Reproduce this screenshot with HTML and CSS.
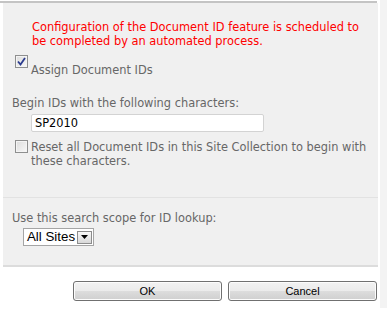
FILE: index.html
```html
<!DOCTYPE html>
<html>
<head>
<meta charset="utf-8">
<link rel="stylesheet" href="styles.css">
</head>
<body>
<div class="page">
  <div class="main">
    <div class="topline"></div>
    <div class="panel">
      <div class="section first">
        <p class="warn">Configuration of the Document ID feature is scheduled to be completed by an automated process.</p>
        <div class="check-row assign">
          <span class="cb checked"><svg width="9" height="9" viewBox="0 0 9 9"><path d="M1 4.5 L3.5 7.5 L8 1" fill="none" stroke="#2b3b8e" stroke-width="1.8"/></svg></span>
          <span class="label assign-label">Assign Document IDs</span>
        </div>
        <div class="field-label begin">Begin IDs with the following characters:</div>
        <div class="input">SP2010</div>
        <div class="check-row reset">
          <span class="cb"></span>
          <span class="label">Reset all Document IDs in this Site Collection to begin with these characters.</span>
        </div>
      </div>
      <div class="section second">
        <div class="field-label">Use this search scope for ID lookup:</div>
        <div class="select"><span class="sel-text">All Sites</span><span class="sel-btn"><svg width="7" height="4" viewBox="0 0 7 4"><path d="M0 0 H7 L3.5 4 Z" fill="#000"/></svg></span></div>
      </div>
    </div>
    <div class="buttons">
      <button class="btn">OK</button>
      <button class="btn">Cancel</button>
    </div>
  </div>
  <div class="side"></div>
</div>
</body>
</html>
```
FILE: styles.css
```css
html, body {
  margin: 0;
  padding: 0;
  background: #ffffff;
}
body {
  font-family: "DejaVu Sans", Verdana, sans-serif;
  font-size: 11.4px;
  color: #676767;
}
.page {
  display: flex;
  width: 387px;
  height: 315px;
}
.main {
  width: 378px;
  display: flex;
  flex-direction: column;
}
.topline {
  height: 2px;
  margin-top: 1px;
  width: 377px;
  background: #c4c4c4;
}
.panel {
  margin-left: 3px;
  width: 375px;
  background: #f0f0f0;
  border-bottom: 2px solid #dcdcdc;
}
.section.first {
  height: 195px;
  border-bottom: 1px solid #e2e2e2;
  padding-top: 17px;
  box-sizing: border-box;
}
.warn {
  margin: 0 0 0 29px;
  color: #ff0000;
  line-height: 14px;
  width: 335px;
}
.check-row {
  display: flex;
  align-items: flex-start;
  margin-left: 12px;
}
.assign {
  margin-top: 7px;
}
.cb {
  width: 11px;
  height: 11px;
  border: 1px solid #8e8f8f;
  background: linear-gradient(135deg, #dcdcdc, #f8f8f8);
  display: flex;
  align-items: center;
  justify-content: center;
  flex: none;
  box-shadow: inset 0 0 0 1px #f4f4f4;
}
.label {
  margin-left: 3px;
  line-height: 14px;
  width: 345px;
}
.assign-label {
  margin-top: 8px;
}
.field-label {
  margin-left: 9px;
  line-height: 14px;
}
.begin {
  margin-top: 19px;
}
.input {
  margin: 4px 0 0 28px;
  height: 16px;
  border: 1px solid #d3d3d3;
  border-radius: 2px;
  background: #ffffff;
  color: #000000;
  line-height: 16px;
  padding-left: 3px;
  box-sizing: content-box;
  width: 228px;
}
.reset {
  margin-top: 8px;
}
.section.second {
  height: 67px;
  padding-top: 13px;
  box-sizing: border-box;
}
.select {
  margin: 3px 0 0 20px;
  display: inline-flex;
  align-items: center;
  height: 16px;
  border: 1px solid #a5a5a5;
  background: #ffffff;
  padding: 0 1px 0 3px;
}
.sel-text {
  font-family: "Liberation Sans", Arial, sans-serif;
  font-size: 13.3px;
  color: #000000;
  line-height: 16px;
  margin-right: 2px;
}
.sel-btn {
  width: 15px;
  height: 13px;
  border: 1px solid #8c8c8c;
  background: linear-gradient(#f8f8f8, #d8d8d8);
  display: flex;
  align-items: center;
  justify-content: center;
  box-sizing: border-box;
}
.buttons {
  display: flex;
  justify-content: flex-end;
  gap: 6px;
  margin-top: 14px;
  padding-right: 1px;
}
.btn {
  width: 149px;
  height: 20px;
  border: 1px solid #707070;
  border-radius: 3px;
  background: linear-gradient(#f2f2f2 0%, #ebebeb 50%, #dddddd 51%, #cfcfcf 100%);
  font-family: "Liberation Sans", Arial, sans-serif;
  font-size: 11px;
  color: #000000;
  padding: 0;
  box-shadow: inset 0 0 0 1px #fcfcfc;
}
.side {
  margin-left: 2px;
  width: 7px;
  height: 308px;
  background: #f3f3f3;
}
```
